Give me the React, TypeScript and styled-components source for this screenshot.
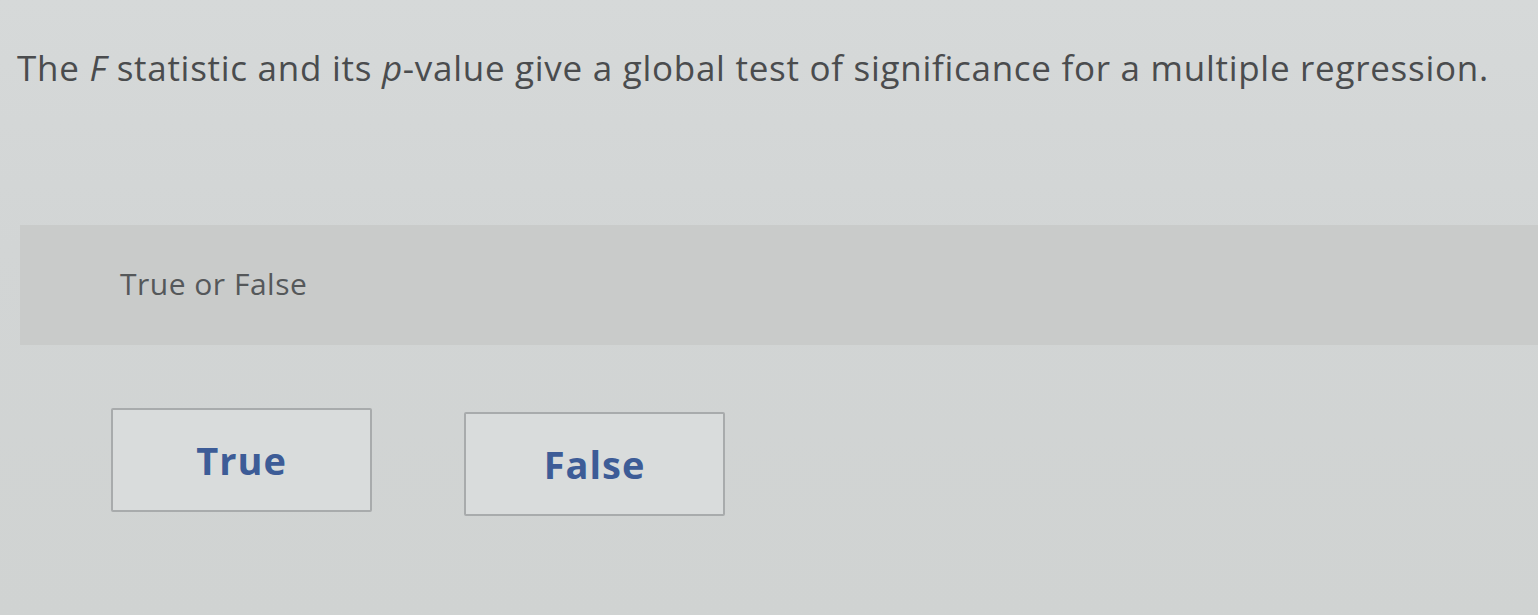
import React from "react";
import styled, { createGlobalStyle } from "styled-components";

const Global = createGlobalStyle`
  html, body { margin: 0; padding: 0; }
  body {
    width: 1538px;
    height: 615px;
    overflow: hidden;
    background: linear-gradient(180deg, #d6d9d9 0%, #d2d5d5 40%, #d0d3d2 100%);
    font-family: "Open Sans", "Liberation Sans", sans-serif;
  }
`;

const Page = styled.div`
  display: flex;
  flex-direction: column;
  width: 1538px;
  height: 615px;
`;

const Question = styled.p`
  margin: 46px 0 0 17px;
  font-size: 35px;
  line-height: 44px;
  color: #4a4c4e;
  letter-spacing: 0.72px;
  white-space: nowrap;
  em { font-style: italic; }
`;

const Band = styled.div`
  margin: 135px 0 0 20px;
  height: 120px;
  background: #c9cbca;
  display: flex;
  align-items: center;
  padding-left: 100px;
  padding-bottom: 4px;
  box-sizing: border-box;
`;

const Label = styled.span`
  font-size: 30px;
  color: #55585a;
  letter-spacing: 0.5px;
`;

const Choices = styled.div`
  display: flex;
  gap: 92px;
  margin: 63px 0 0 111px;
  align-items: flex-start;
`;

const Choice = styled.button<{ $offset?: number }>`
  width: 261px;
  height: 104px;
  margin-top: ${(p) => p.$offset ?? 0}px;
  background: #d9dcdc;
  border: 2px solid #a8abac;
  border-radius: 2px;
  font-family: "Open Sans", "Liberation Sans", sans-serif;
  font-weight: 700;
  font-size: 38px;
  letter-spacing: 1px;
  color: #3d5c97;
  display: flex;
  align-items: center;
  justify-content: center;
  padding: 0;
`;

export default function App() {
  return (
    <>
      <Global />
      <Page>
        <Question>
          The <em>F</em> statistic and its <em>p</em>-value give a global test of significance for a multiple regression.
        </Question>
        <Band>
          <Label>True or False</Label>
        </Band>
        <Choices>
          <Choice>True</Choice>
          <Choice $offset={4}>False</Choice>
        </Choices>
      </Page>
    </>
  );
}
